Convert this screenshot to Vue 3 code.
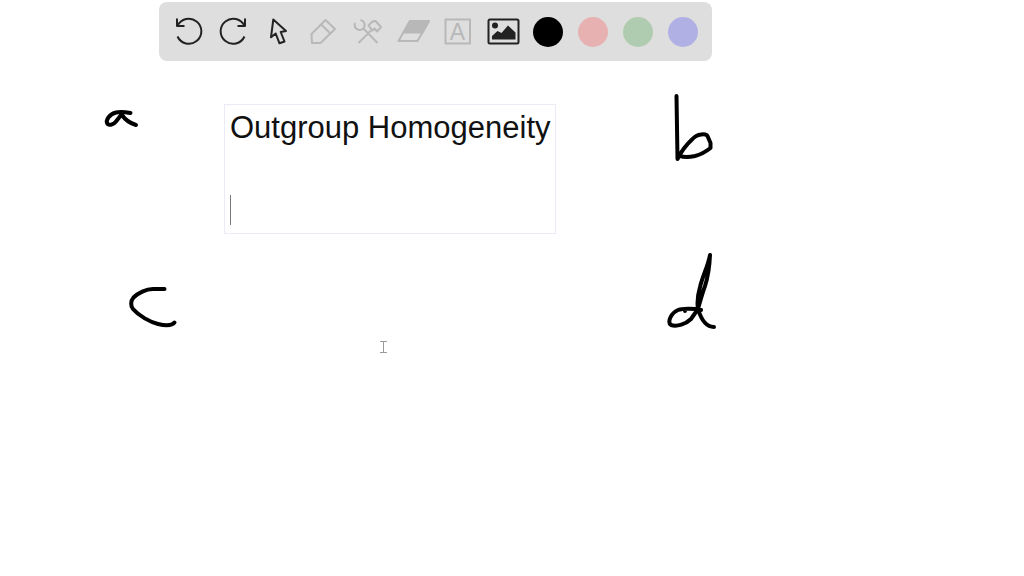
<script setup>
import { ref } from 'vue'

const note = ref('Outgroup Homogeneity\n\n')
const active = ref('black')
const colors = [
  { name: 'black', hex: '#000000' },
  { name: 'red', hex: '#e7b1b1' },
  { name: 'green', hex: '#b0ccb0' },
  { name: 'blue', hex: '#b1b0e5' },
]
</script>

<template>
  <main class="board">
    <svg class="ink" width="1024" height="576" viewBox="0 0 1024 576" aria-label="Handwritten notes">
      <path d="M130.500 113C125 112 120 111.500 116 112.500C110 114 105 120 107.500 124C110 126 114 124 116 121.500L121.500 114.500C125 119.500 129 123 136 125" />
      <path d="M676.500 96L677.500 159C681 152 686 145 692 139.500Q696 135 701 134.500Q706 133.500 707.500 136L710.500 143V148Q703 154 695 156Q686 158 680 156" />
      <path d="M164.500 289H153C146 289 138 293 133.500 297.500C130.500 301 130.500 306 133 309C139 316 150 322 158 324Q171 327 174.500 322.500" />
      <path d="M710 255C709.500 266 708 277 705 286C702 294 700 302 698 309C697 303 698 294 700 287C703 275 708 266 710 255M701 310C693 308 682 308.500 678 310C671 313 667 322 671 325C677 327 686 324 691 319L698 309C701 319 706 327 714 327M685 310V311" />
      <path class="beam" d="M380.500 341.500H386.500M383.500 341.500V352.500M380.500 352.500H386.500" />
    </svg>

    <nav class="toolbar" aria-label="Drawing tools">
      <button type="button" aria-label="Undo">
        <svg viewBox="0 0 45 45"><path d="M12.500 17A12.500 12.500 0 1 1 12.500 27.500M12 9.500V17H19.500" /></svg>
      </button>
      <button type="button" aria-label="Redo">
        <svg viewBox="0 0 45 45"><path d="M34.500 17A12.500 12.500 0 1 0 34.500 27.500M35 9.500V17H27.500" /></svg>
      </button>
      <button type="button" aria-label="Select">
        <svg viewBox="0 0 45 45"><path d="M18.300 10.500L16 28.300L20.700 24.500L24.500 34.300L29.500 32.500L25.700 23L31 22Z" /></svg>
      </button>
      <button type="button" class="muted" aria-label="Pencil">
        <svg viewBox="0 0 45 45"><path d="M25.500 11L35 20L20.500 34H12L11.500 25ZM21 15.500L30.500 24.500" /></svg>
      </button>
      <button type="button" class="muted" aria-label="Tools">
        <svg viewBox="0 0 45 45"><path d="M10 14A5 5 0 1 0 15.500 11M18.500 19.500L32.500 34M13.500 34L27 20.500M23.500 16.500L27.500 12.500L30.500 12L36 18L32 22.500L29.500 19.500L27.500 21.500Z" /></svg>
      </button>
      <button type="button" class="muted" aria-label="Eraser">
        <svg viewBox="0 0 45 45"><path d="M20 12H39L27.500 32H8.500Z" /><path class="solid" d="M20 12H39L32.500 23.500H13.500Z" /></svg>
      </button>
      <button type="button" class="muted" aria-label="Text">
        <svg viewBox="0 0 45 45"><path d="M10.500 10.500H35V34.500H10.500Z" /><text x="22.500" y="31" text-anchor="middle">A</text></svg>
      </button>
      <button type="button" aria-label="Image">
        <svg viewBox="0 0 45 45"><rect x="8.500" y="10.500" width="30" height="24" rx="1.500" /><circle class="solid dot" cx="15" cy="16.500" r="3" /><path class="solid dot" d="M12 30.500V27L17.500 22L21.500 24L28 16.500L35.500 23.500V30.500Z" /></svg>
      </button>
      <button
        v-for="c in colors"
        :key="c.name"
        type="button"
        :aria-label="c.name"
        :aria-pressed="active === c.name"
        @click="active = c.name"
      >
        <span class="swatch" :style="{ background: c.hex }"></span>
      </button>
    </nav>

    <div class="note">
      <textarea v-model="note" rows="3" aria-label="Text note" spellcheck="false"></textarea>
      <span class="caret"></span>
    </div>
  </main>
</template>

<style>
body {
  margin: 0;
  background: #fff;
}
</style>

<style scoped>
.board {
  position: relative;
  box-sizing: border-box;
  min-height: 100vh;
  padding-top: 2px;
  overflow: hidden;
  font-family: "Liberation Sans", Arial, sans-serif;
}
.ink {
  position: absolute;
  top: 0;
  left: 0;
  pointer-events: none;
  fill: none;
  stroke: #000;
  stroke-width: 4;
  stroke-linecap: round;
  stroke-linejoin: round;
}
.beam {
  stroke: #999;
  stroke-width: 1;
}
.toolbar {
  display: flex;
  width: max-content;
  margin-left: 159px;
  padding: 7px 7px 7px 6px;
  background: #dedede;
  border-radius: 8px;
}
.toolbar button {
  display: flex;
  align-items: center;
  justify-content: center;
  width: 45px;
  height: 45px;
  padding: 0;
  border: 0;
  background: none;
  color: #222;
}
.toolbar .muted {
  color: #b8b8b8;
}
.toolbar svg {
  width: 45px;
  height: 45px;
  fill: none;
  stroke: currentColor;
  stroke-width: 2;
  stroke-linejoin: round;
}
.toolbar .solid {
  fill: currentColor;
}
.toolbar .dot {
  stroke: none;
}
.toolbar text {
  font: 23px "Liberation Sans", Arial, sans-serif;
  fill: currentColor;
  stroke: none;
}
.swatch {
  width: 30px;
  height: 30px;
  border-radius: 50%;
}
.note {
  position: absolute;
  top: 104px;
  left: 224px;
}
.note textarea {
  display: block;
  box-sizing: border-box;
  width: 332px;
  height: 130px;
  padding: 2px 5px 0;
  border: 1px solid #ebebf8;
  outline: 0;
  resize: none;
  overflow: hidden;
  white-space: pre;
  background: transparent;
  color: #111;
  font: 31px/42px "Liberation Sans", Arial, sans-serif;
}
.caret {
  position: absolute;
  top: 91px;
  left: 6px;
  width: 1px;
  height: 30px;
  background: #777;
}
</style>
